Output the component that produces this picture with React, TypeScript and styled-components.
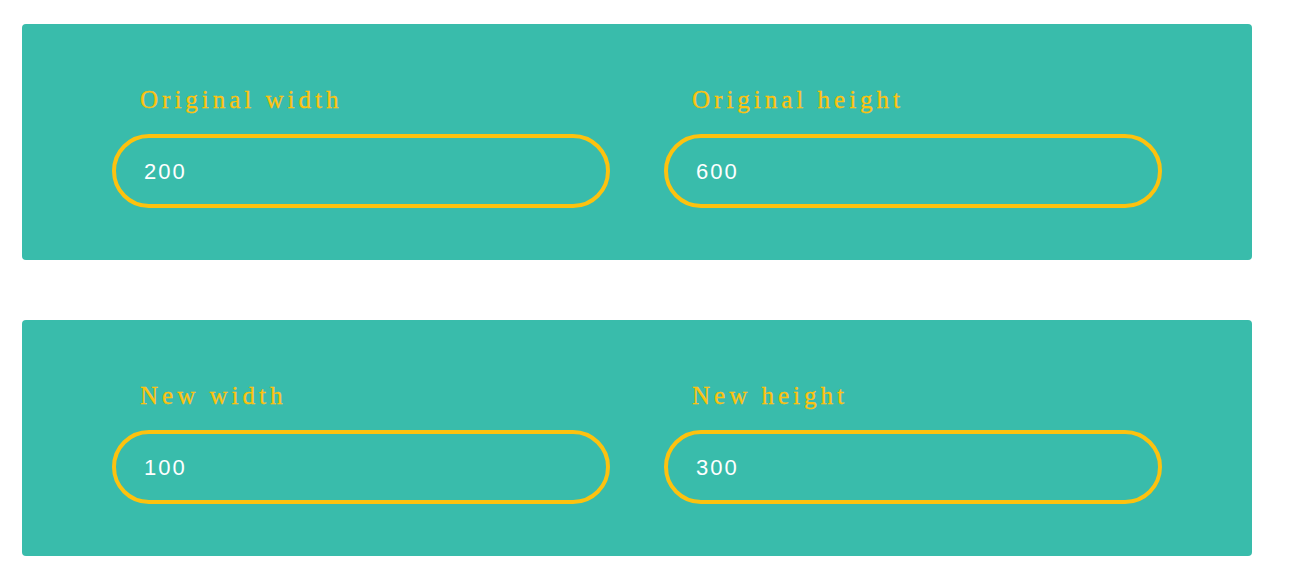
import styled, { createGlobalStyle } from 'styled-components';

interface IField {
  id: string;
  label: string;
  value: string;
}

const groups: IField[][] = [
  [
    { id: 'ow', label: 'Original width', value: '200' },
    { id: 'oh', label: 'Original height', value: '600' },
  ],
  [
    { id: 'nw', label: 'New width', value: '100' },
    { id: 'nh', label: 'New height', value: '300' },
  ],
];

const App = () => {
  return (
    <>
      <GlobalStyle />
      <Page>
        {groups.map((fields, i) => (
          <Panel key={i}>
            {fields.map((field) => (
              <Field key={field.id}>
                <Label htmlFor={field.id}>{field.label}</Label>
                <Input id={field.id} defaultValue={field.value} />
              </Field>
            ))}
          </Panel>
        ))}
      </Page>
    </>
  );
};

const GlobalStyle = createGlobalStyle`
  body {
    margin: 0;
    background: #ffffff;
    font-family: "Liberation Sans", Arial, sans-serif;
  }
`;

const Page = styled.main`
  display: flex;
  flex-direction: column;
  gap: 60px;
  padding: 24px 42px 24px 22px;
`;

const Panel = styled.section`
  display: grid;
  grid-template-columns: 1fr 1fr;
  column-gap: 54px;
  padding: 61px 90px 52px;
  background: #39bcab;
  border-radius: 4px;
`;

const Field = styled.div`
  display: flex;
  flex-direction: column;
`;

const Label = styled.label`
  margin: 0 0 19px 28px;
  font-family: "Liberation Serif", "Times New Roman", serif;
  font-size: 25px;
  line-height: 30px;
  letter-spacing: 4px;
  color: #fdc20f;
  -webkit-text-stroke: 0.3px #fdc20f;
`;

const Input = styled.input`
  box-sizing: border-box;
  height: 74px;
  width: 100%;
  padding: 2px 28px 0;
  background: transparent;
  border: 4px solid #fdc20f;
  border-radius: 37px;
  outline: none;
  font-family: "Liberation Sans", Arial, sans-serif;
  font-size: 22px;
  letter-spacing: 2px;
  color: #ffffff;
`;

export default App;
